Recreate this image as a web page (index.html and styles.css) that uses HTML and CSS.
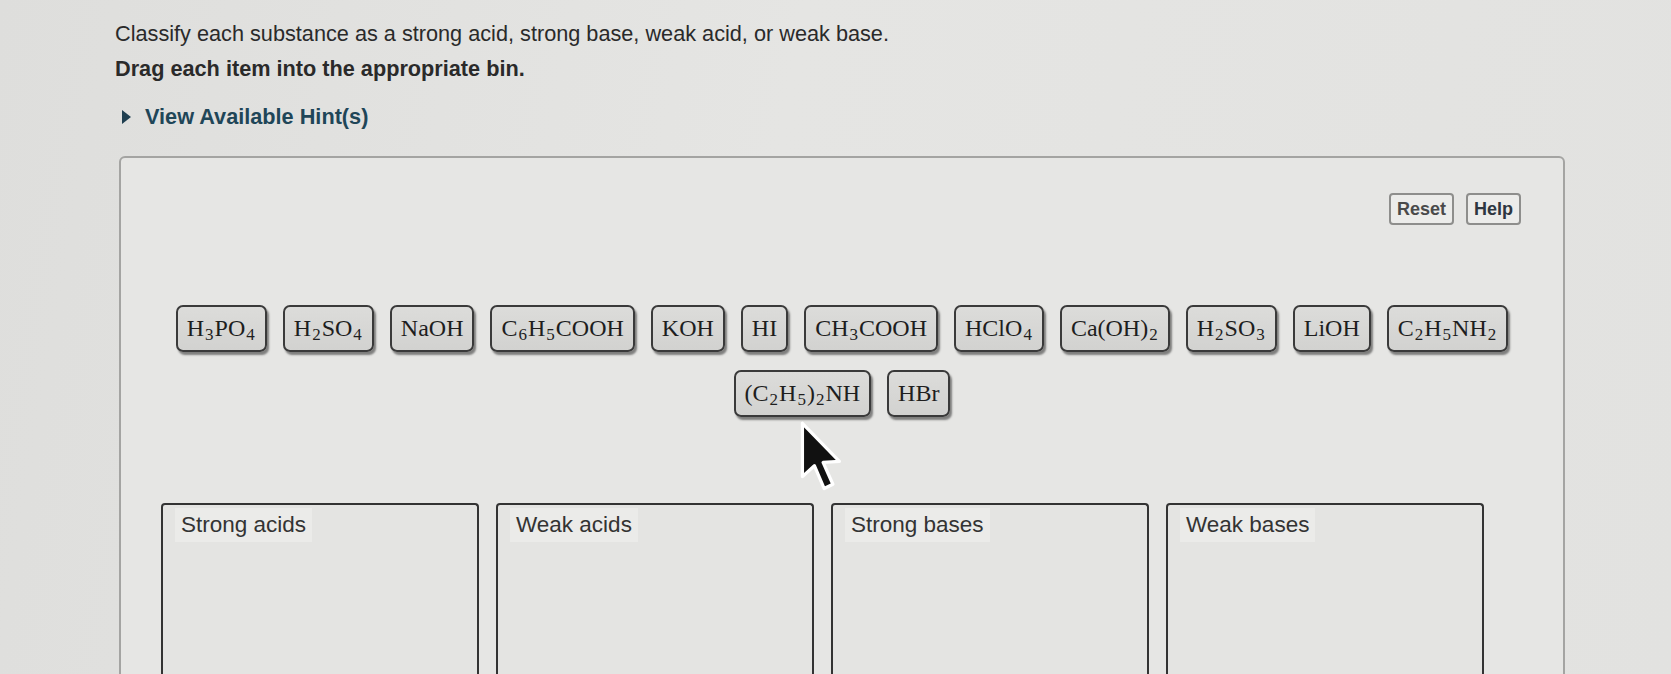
FILE: index.html
```html
<!DOCTYPE html>
<html lang="en">
<head>
  <meta charset="UTF-8">
  <meta name="viewport" content="width=device-width, initial-scale=1.0">
  <title>Classify Acids and Bases</title>
  <link rel="stylesheet" href="styles.css">
</head>
<body>
  <div class="content">
    <p class="prompt">Classify each substance as a strong acid, strong base, weak acid, or weak base.</p>
    <p class="instruction">Drag each item into the appropriate bin.</p>
    <a href="#" class="hint-toggle"><span class="hint-arrow"></span>View Available Hint(s)</a>

    <div class="sort-panel">
      <div class="toolbar">
        <button class="tool-btn reset-btn">Reset</button>
        <button class="tool-btn">Help</button>
      </div>

      <div class="chip-row">
        <div class="chip">H<sub>3</sub>PO<sub>4</sub></div>
        <div class="chip">H<sub>2</sub>SO<sub>4</sub></div>
        <div class="chip">NaOH</div>
        <div class="chip">C<sub>6</sub>H<sub>5</sub>COOH</div>
        <div class="chip">KOH</div>
        <div class="chip">HI</div>
        <div class="chip">CH<sub>3</sub>COOH</div>
        <div class="chip">HClO<sub>4</sub></div>
        <div class="chip">Ca(OH)<sub>2</sub></div>
        <div class="chip">H<sub>2</sub>SO<sub>3</sub></div>
        <div class="chip">LiOH</div>
        <div class="chip">C<sub>2</sub>H<sub>5</sub>NH<sub>2</sub></div>
      </div>
      <div class="chip-row">
        <div class="chip">(C<sub>2</sub>H<sub>5</sub>)<sub>2</sub>NH</div>
        <div class="chip">HBr</div>
      </div>

      <div class="bins">
        <div class="bin"><span class="bin-label">Strong acids</span></div>
        <div class="bin"><span class="bin-label">Weak acids</span></div>
        <div class="bin"><span class="bin-label">Strong bases</span></div>
        <div class="bin"><span class="bin-label">Weak bases</span></div>
      </div>

      <!-- mouse pointer hovering under the second row -->
      <svg class="pointer" width="46" height="74" viewBox="0 0 42 68">
        <path d="M3 3 L3 52 L14 42 L23 63 L31 59 L22 39 L37 38 Z" fill="#111" stroke="#fff" stroke-width="3" stroke-linejoin="round"/>
      </svg>
    </div>
  </div>
</body>
</html>
```

FILE: styles.css
```css
* {
  box-sizing: border-box;
  margin: 0;
  padding: 0;
}

body {
  height: 100vh;
  overflow: hidden;
  background: linear-gradient(100deg, #dededc 0%, #e5e5e3 45%, #e2e2e0 100%);
  font-family: 'Liberation Sans', Arial, sans-serif;
  color: #2a2a2a;
}

.content {
  padding: 20px 106px 0 115px;
}

.prompt {
  font-size: 21.7px;
  line-height: 28px;
}

.instruction {
  margin-top: 7px;
  font-size: 21.7px;
  line-height: 28px;
  font-weight: bold;
}

.hint-toggle {
  display: flex;
  align-items: center;
  margin-top: 20px;
  font-size: 21.7px;
  line-height: 28px;
  font-weight: bold;
  color: #1f4658;
  text-decoration: none;
}

.hint-arrow {
  width: 0;
  height: 0;
  margin: 0 14px 0 7px;
  border-top: 7px solid transparent;
  border-bottom: 7px solid transparent;
  border-left: 9px solid #1f3f50;
}

.sort-panel {
  position: relative;
  margin: 25px 0 0 4px;
  height: 600px;
  padding: 35px 40px 0 40px;
  background: #e6e6e4;
  border: 2px solid #a4a4a2;
  border-radius: 6px;
}

.toolbar {
  display: flex;
  justify-content: flex-end;
  gap: 12px;
  padding-right: 2px;
}

.tool-btn {
  height: 32px;
  padding: 0 6px;
  background: #ececea;
  border: 2px solid #8e8e8c;
  border-radius: 4px;
  font-family: 'Liberation Sans', Arial, sans-serif;
  font-size: 18px;
  font-weight: bold;
  color: #2e3640;
}

.reset-btn {
  color: #4a4a4a;
}

.chip-row {
  display: flex;
  justify-content: center;
  align-items: flex-start;
  gap: 16px;
  margin-top: 80px;
}

.chip-row + .chip-row {
  margin-top: 18px;
}

.chip {
  display: inline-block;
  height: 47px;
  padding: 0 9px;
  line-height: 42px;
  background: linear-gradient(#dcdcda, #d2d2d0);
  border: 2px solid #3a3a3a;
  border-radius: 7px;
  box-shadow: 2px 3px 2px rgba(0, 0, 0, 0.45);
  font-family: 'Liberation Serif', 'Times New Roman', serif;
  font-size: 24px;
  color: #1e1e1e;
  white-space: nowrap;
}

.chip sub {
  font-size: 17px;
  line-height: 0;
  vertical-align: -4px;
  margin: 0 1px;
}

.bins {
  display: grid;
  grid-template-columns: repeat(4, 318px);
  gap: 17px;
  margin-top: 86px;
}

.bin {
  height: 240px;
  padding: 3px 0 0 12px;
  background: #e4e4e2;
  border: 2px solid #333;
  border-bottom: none;
  border-radius: 4px 4px 0 0;
}

.bin-label {
  display: inline-block;
  padding: 4px 6px;
  background: #ebebe9;
  font-size: 22.5px;
  color: #333;
}

.pointer {
  position: absolute;
  left: 678px;
  top: 262px;
}
```
